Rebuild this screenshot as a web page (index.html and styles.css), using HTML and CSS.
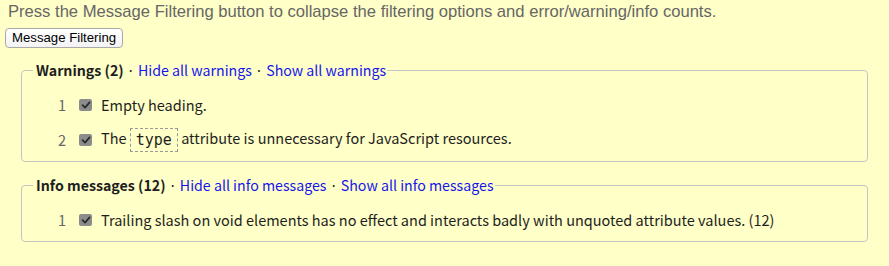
FILE: index.html
```html
<!DOCTYPE html>
<html lang="en">
<head>
<meta charset="utf-8">
<title>Message Filtering</title>
<link rel="stylesheet" href="styles.css">
</head>
<body>
<div class="page">
  <p class="intro">Press the Message Filtering button to collapse the filtering options and error/warning/info counts.</p>
  <button class="filter-btn" type="button">Message Filtering</button>

  <fieldset class="group">
    <legend class="group-title"><strong>Warnings (2)</strong> · <a href="#">Hide all warnings</a> · <a href="#">Show all warnings</a></legend>
    <ol class="msgs">
      <li class="msg">
        <span class="num">1</span>
        <span class="cb"><svg viewBox="0 0 12 12" width="12" height="12"><path d="M2.6 6.2 L5 8.6 L9.6 3.4" fill="none" stroke="#2b2b2b" stroke-width="1.8" stroke-linecap="round" stroke-linejoin="round"/></svg></span>
        <span class="text">Empty heading.</span>
      </li>
      <li class="msg">
        <span class="num">2</span>
        <span class="cb"><svg viewBox="0 0 12 12" width="12" height="12"><path d="M2.6 6.2 L5 8.6 L9.6 3.4" fill="none" stroke="#2b2b2b" stroke-width="1.8" stroke-linecap="round" stroke-linejoin="round"/></svg></span>
        <span class="text">The <code class="code">type</code> attribute is unnecessary for JavaScript resources.</span>
      </li>
    </ol>
  </fieldset>

  <fieldset class="group">
    <legend class="group-title"><strong>Info messages (12)</strong> · <a href="#">Hide all info messages</a> · <a href="#">Show all info messages</a></legend>
    <ol class="msgs">
      <li class="msg">
        <span class="num">1</span>
        <span class="cb"><svg viewBox="0 0 12 12" width="12" height="12"><path d="M2.6 6.2 L5 8.6 L9.6 3.4" fill="none" stroke="#2b2b2b" stroke-width="1.8" stroke-linecap="round" stroke-linejoin="round"/></svg></span>
        <span class="text">Trailing slash on void elements has no effect and interacts badly with unquoted attribute values. (12)</span>
      </li>
    </ol>
  </fieldset>
</div>
</body>
</html>
```

FILE: styles.css
```css
html, body {
  margin: 0;
  padding: 0;
  background: #ffffc8;
}

.page {
  padding: 2px 5px 0 5px;
  font-family: "Noto Sans CJK KR", "Noto Sans", sans-serif;
  color: #1e1e1e;
}

.intro {
  margin: 0 0 0 3px;
  font-family: "Liberation Sans", Arial, sans-serif;
  font-size: 16.6px;
  line-height: 20px;
  color: #666;
}

.filter-btn {
  display: block;
  margin-top: 6px;
  font-family: "Liberation Sans", Arial, sans-serif;
  font-size: 13.2px;
  line-height: 15px;
  color: #000;
  padding: 1px 6px 2px 6px;
  border: 1px solid #a9a9a9;
  border-radius: 4px;
  background: linear-gradient(#ffffff, #f3f3f3);
}

.group {
  margin: 12px 16px 0 16px;
  padding: 0;
  border: 1px solid #c4c4c4;
  border-radius: 4px;
}

.group + .group {
  margin-top: 13px;
}

.group-title {
  margin-left: 11px;
  padding: 0 1px 0 3px;
  font-size: 14.2px;
  line-height: 20px;
  color: #1e1e1e;
}

.group-title strong {
  font-weight: 700;
}

.group-title a {
  color: #1515ee;
  text-decoration: none;
}

.msgs {
  list-style: none;
  margin: 13px 0 9px 0;
  padding: 0;
  display: flex;
  flex-direction: column;
  gap: 11px;
}

.msg {
  display: flex;
  align-items: center;
  min-height: 24px;
  font-size: 14.5px;
  line-height: 20px;
}

.num {
  width: 44px;
  text-align: right;
  color: #666;
}

.cb {
  display: flex;
  align-items: center;
  justify-content: center;
  width: 13px;
  height: 12px;
  margin: 0 9px 0 13px;
  background: #8c8c8c;
  border-radius: 2px;
}

.text {
  color: #1e1e1e;
}

.code {
  display: inline-block;
  font-family: "DejaVu Sans Mono", "Liberation Mono", monospace;
  font-size: 15px;
  line-height: 22px;
  padding: 0 5px;
  border: 1px dashed #999;
  color: #1e1e1e;
  vertical-align: middle;
}
```
